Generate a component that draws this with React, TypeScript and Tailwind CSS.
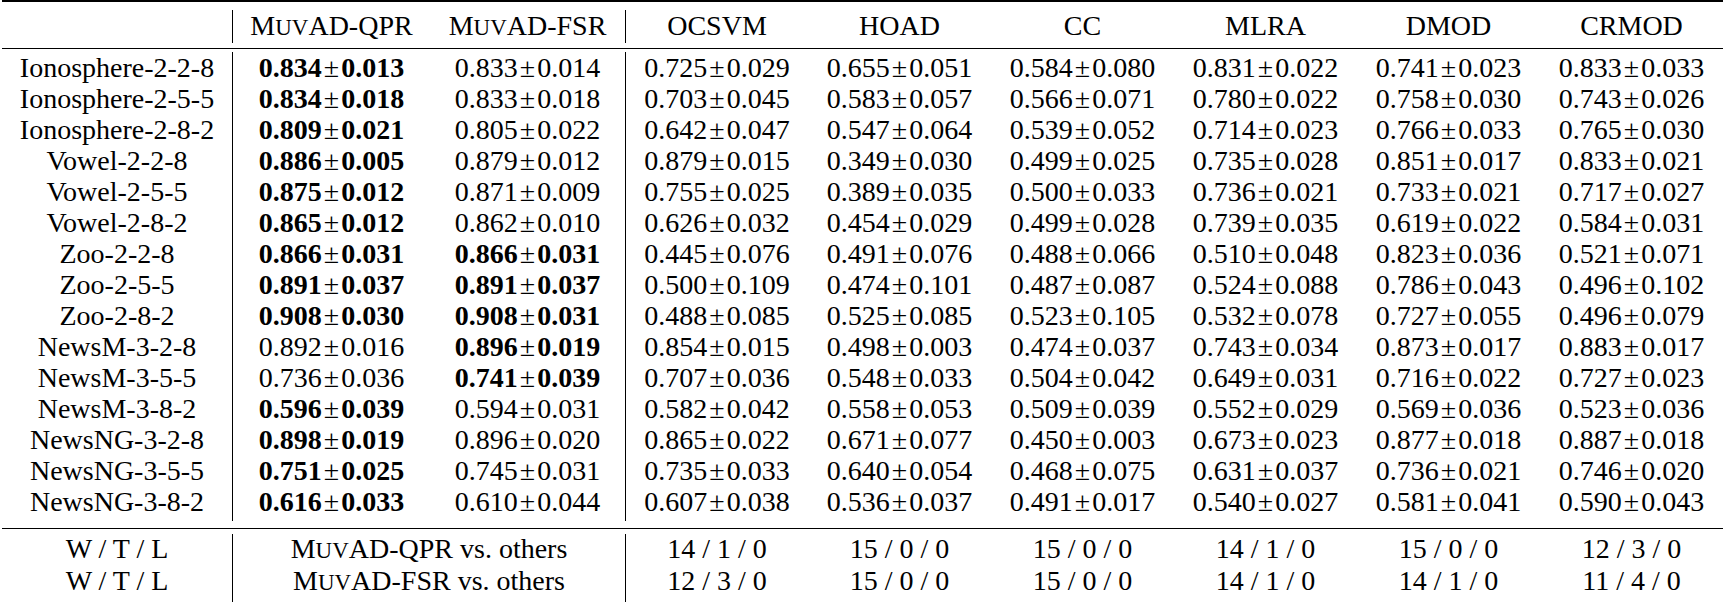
import React from "react";

type Row = { label: string; v: string[]; b: [boolean, boolean] };

const rows: Row[] = [
  { label: "Ionosphere-2-2-8", b: [true, false], v: ["0.834±0.013", "0.833±0.014", "0.725±0.029", "0.655±0.051", "0.584±0.080", "0.831±0.022", "0.741±0.023", "0.833±0.033"] },
  { label: "Ionosphere-2-5-5", b: [true, false], v: ["0.834±0.018", "0.833±0.018", "0.703±0.045", "0.583±0.057", "0.566±0.071", "0.780±0.022", "0.758±0.030", "0.743±0.026"] },
  { label: "Ionosphere-2-8-2", b: [true, false], v: ["0.809±0.021", "0.805±0.022", "0.642±0.047", "0.547±0.064", "0.539±0.052", "0.714±0.023", "0.766±0.033", "0.765±0.030"] },
  { label: "Vowel-2-2-8", b: [true, false], v: ["0.886±0.005", "0.879±0.012", "0.879±0.015", "0.349±0.030", "0.499±0.025", "0.735±0.028", "0.851±0.017", "0.833±0.021"] },
  { label: "Vowel-2-5-5", b: [true, false], v: ["0.875±0.012", "0.871±0.009", "0.755±0.025", "0.389±0.035", "0.500±0.033", "0.736±0.021", "0.733±0.021", "0.717±0.027"] },
  { label: "Vowel-2-8-2", b: [true, false], v: ["0.865±0.012", "0.862±0.010", "0.626±0.032", "0.454±0.029", "0.499±0.028", "0.739±0.035", "0.619±0.022", "0.584±0.031"] },
  { label: "Zoo-2-2-8", b: [true, true], v: ["0.866±0.031", "0.866±0.031", "0.445±0.076", "0.491±0.076", "0.488±0.066", "0.510±0.048", "0.823±0.036", "0.521±0.071"] },
  { label: "Zoo-2-5-5", b: [true, true], v: ["0.891±0.037", "0.891±0.037", "0.500±0.109", "0.474±0.101", "0.487±0.087", "0.524±0.088", "0.786±0.043", "0.496±0.102"] },
  { label: "Zoo-2-8-2", b: [true, true], v: ["0.908±0.030", "0.908±0.031", "0.488±0.085", "0.525±0.085", "0.523±0.105", "0.532±0.078", "0.727±0.055", "0.496±0.079"] },
  { label: "NewsM-3-2-8", b: [false, true], v: ["0.892±0.016", "0.896±0.019", "0.854±0.015", "0.498±0.003", "0.474±0.037", "0.743±0.034", "0.873±0.017", "0.883±0.017"] },
  { label: "NewsM-3-5-5", b: [false, true], v: ["0.736±0.036", "0.741±0.039", "0.707±0.036", "0.548±0.033", "0.504±0.042", "0.649±0.031", "0.716±0.022", "0.727±0.023"] },
  { label: "NewsM-3-8-2", b: [true, false], v: ["0.596±0.039", "0.594±0.031", "0.582±0.042", "0.558±0.053", "0.509±0.039", "0.552±0.029", "0.569±0.036", "0.523±0.036"] },
  { label: "NewsNG-3-2-8", b: [true, false], v: ["0.898±0.019", "0.896±0.020", "0.865±0.022", "0.671±0.077", "0.450±0.003", "0.673±0.023", "0.877±0.018", "0.887±0.018"] },
  { label: "NewsNG-3-5-5", b: [true, false], v: ["0.751±0.025", "0.745±0.031", "0.735±0.033", "0.640±0.054", "0.468±0.075", "0.631±0.037", "0.736±0.021", "0.746±0.020"] },
  { label: "NewsNG-3-8-2", b: [true, false], v: ["0.616±0.033", "0.610±0.044", "0.607±0.038", "0.536±0.037", "0.491±0.017", "0.540±0.027", "0.581±0.041", "0.590±0.043"] },
];

const wtl = [
  { name: "QPR", v: ["14 / 1 / 0", "15 / 0 / 0", "15 / 0 / 0", "14 / 1 / 0", "15 / 0 / 0", "12 / 3 / 0"] },
  { name: "FSR", v: ["12 / 3 / 0", "15 / 0 / 0", "15 / 0 / 0", "14 / 1 / 0", "14 / 1 / 0", "11 / 4 / 0"] },
];

const methods = ["OCSVM", "HOAD", "CC", "MLRA", "DMOD", "CRMOD"];

const grid = "grid grid-cols-[230px_198px_195px_183px_183px_183px_183px_183px_183px]";

function Muvad({ suffix }: { suffix: string }) {
  return (
    <span>
      M<span className="text-[0.82em]">UV</span>AD-{suffix}
    </span>
  );
}

function Val({ s, bold }: { s: string; bold?: boolean }) {
  const [a, c] = s.split("±");
  return (
    <span className={bold ? "font-bold" : ""}>
      {a}
      <span className="font-normal mx-[2px]">±</span>
      {c}
    </span>
  );
}

export default function App() {
  return (
    <div className="w-[1728px] h-[607px] bg-white text-black font-['Liberation_Serif'] text-[28px] leading-[31px]">
      <div className="ml-[2px] w-[1721px]">
        <div className="h-[2px] bg-black" />
        {/* header */}
        <div className={`${grid} pt-[8px] pb-[5px]`}>
          <div className="h-[31px]" />
          <div className="text-center border-l border-black whitespace-nowrap">
            <Muvad suffix="QPR" />
          </div>
          <div className="text-center whitespace-nowrap">
            <Muvad suffix="FSR" />
          </div>
          {methods.map((m, i) => (
            <div key={m} className={`text-center ${i === 0 ? "border-l border-black" : ""}`}>
              {m}
            </div>
          ))}
        </div>
        <div className="h-[1px] bg-black" />
        {/* body */}
        <div className={`${grid} pt-[3px] pb-[7px]`}>
          {rows.map((r, i) => {
            const last = i === rows.length - 1 ? "pb-[4px]" : "";
            return (
              <React.Fragment key={r.label}>
                <div className={`text-center whitespace-nowrap ${last}`}>{r.label}</div>
                {r.v.map((s, j) => (
                  <div
                    key={j}
                    className={`text-center whitespace-nowrap ${j === 0 || j === 2 ? "border-l border-black" : ""} ${last}`}
                  >
                    <Val s={s} bold={j < 2 ? r.b[j] : false} />
                  </div>
                ))}
              </React.Fragment>
            );
          })}
        </div>
        <div className="h-[1px] bg-black" />
        {/* summary */}
        <div className={`${grid} pt-[5px] pb-[7px] leading-[30px]`}>
          {wtl.map((w, k) => {
            const last = k === 1 ? "pb-[4px]" : "";
            return (
              <React.Fragment key={w.name}>
                <div className={`text-center whitespace-pre ${last}`}>W / T / L</div>
                <div className={`col-span-2 text-center border-l border-black whitespace-nowrap ${last}`}>
                  <Muvad suffix={w.name} /> vs. others
                </div>
                {w.v.map((s, j) => (
                  <div key={j} className={`text-center whitespace-pre ${j === 0 ? "border-l border-black" : ""} ${last}`}>
                    {s}
                  </div>
                ))}
              </React.Fragment>
            );
          })}
        </div>
        <div className="h-[2px] bg-black" />
      </div>
    </div>
  );
}
